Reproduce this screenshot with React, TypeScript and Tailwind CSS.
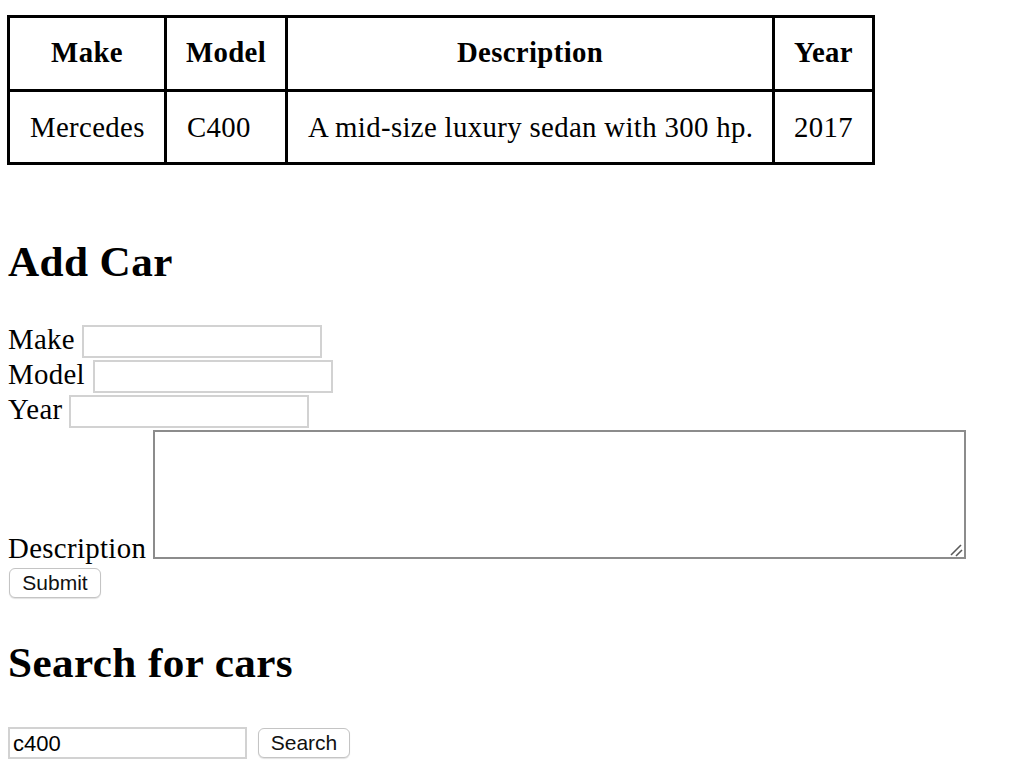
export default function App() {
  const th = "flex items-center justify-center border-r-[3px] border-black pb-[2px] leading-[31px]";
  const td = "flex items-center border-r-[3px] border-black pl-[20px] leading-[31px] whitespace-nowrap";
  return (
    <div className="min-h-[770px] bg-white px-[8px] pt-[15px] font-['Liberation_Serif',serif] text-black">
      <div className="ml-[-1px] w-[868px] border-[3px] border-black text-[28.8px] tracking-[0.35px]">
        <div className="flex h-[74px] border-b-[3px] border-black font-bold">
          <div className={`${th} w-[157px]`}>Make</div>
          <div className={`${th} w-[121px]`}>Model</div>
          <div className={`${th} w-[487px]`}>Description</div>
          <div className="flex w-[97px] items-center justify-center pb-[2px] leading-[31px]">Year</div>
        </div>
        <div className="flex h-[70px]">
          <div className={`${td} w-[157px]`}>Mercedes</div>
          <div className={`${td} w-[121px] pl-[19px]`}>C400</div>
          <div className={`${td} w-[487px]`}>A mid-size luxury sedan with 300 hp.</div>
          <div className="flex w-[97px] items-center pl-[19px] leading-[31px]">2017</div>
        </div>
      </div>

      <h2 className="mt-[72px] h-[50px] text-[43.2px] font-bold leading-[50px] tracking-[0.4px]">Add Car</h2>

      <form className="mt-[38px] text-[28.8px] tracking-[0.35px]" onSubmit={(e) => e.preventDefault()}>
        <div className="flex items-start">
          <label className="w-[74px] leading-[29px]">Make</label>
          <input className="h-[33px] w-[240px] border-2 border-[#d2d2d2] bg-white outline-none" />
        </div>
        <div className="mt-[2px] flex items-start">
          <label className="w-[85px] leading-[29px]">Model</label>
          <input className="h-[33px] w-[240px] border-2 border-[#d2d2d2] bg-white outline-none" />
        </div>
        <div className="mt-[2px] flex items-start">
          <label className="w-[61px] leading-[29px]">Year</label>
          <input className="h-[33px] w-[240px] border-2 border-[#d2d2d2] bg-white outline-none" />
        </div>
        <div className="mt-[2px] flex items-end">
          <label className="w-[145px] leading-[21px]">Description</label>
          <div className="relative">
            <textarea className="block h-[129px] w-[813px] resize-none border-2 border-[#8c8c8c] bg-white outline-none" />
            <svg className="absolute bottom-[2px] right-[2px]" width="14" height="14" viewBox="0 0 14 14">
              <line x1="1" y1="12" x2="11" y2="2" stroke="#5a5a5a" strokeWidth="1.6" />
              <line x1="6" y1="13" x2="12" y2="7" stroke="#5a5a5a" strokeWidth="1.6" />
            </svg>
          </div>
        </div>
        <button
          type="submit"
          className="ml-[1px] mt-[9px] flex h-[30px] w-[92px] items-center justify-center rounded-[6px] border border-[#c4c4c4] bg-white font-['Liberation_Sans',sans-serif] text-[21px] tracking-normal text-[#111] shadow-[0_1px_1px_rgba(0,0,0,0.12)]"
        >
          Submit
        </button>
      </form>

      <h2 className="mt-[40px] h-[50px] text-[43.2px] font-bold leading-[50px] tracking-[0.4px]">Search for cars</h2>

      <div className="mt-[39px] flex items-center">
        <input
          defaultValue="c400"
          className="h-[32px] w-[239px] border-2 border-[#d2d2d2] bg-white pl-[3px] font-['Liberation_Sans',sans-serif] text-[22px] text-black outline-none"
        />
        <button className="ml-[11px] flex h-[30px] w-[92px] items-center justify-center rounded-[6px] border border-[#c4c4c4] bg-white font-['Liberation_Sans',sans-serif] text-[21px] text-[#111] shadow-[0_1px_1px_rgba(0,0,0,0.12)]">
          Search
        </button>
      </div>
    </div>
  );
}
